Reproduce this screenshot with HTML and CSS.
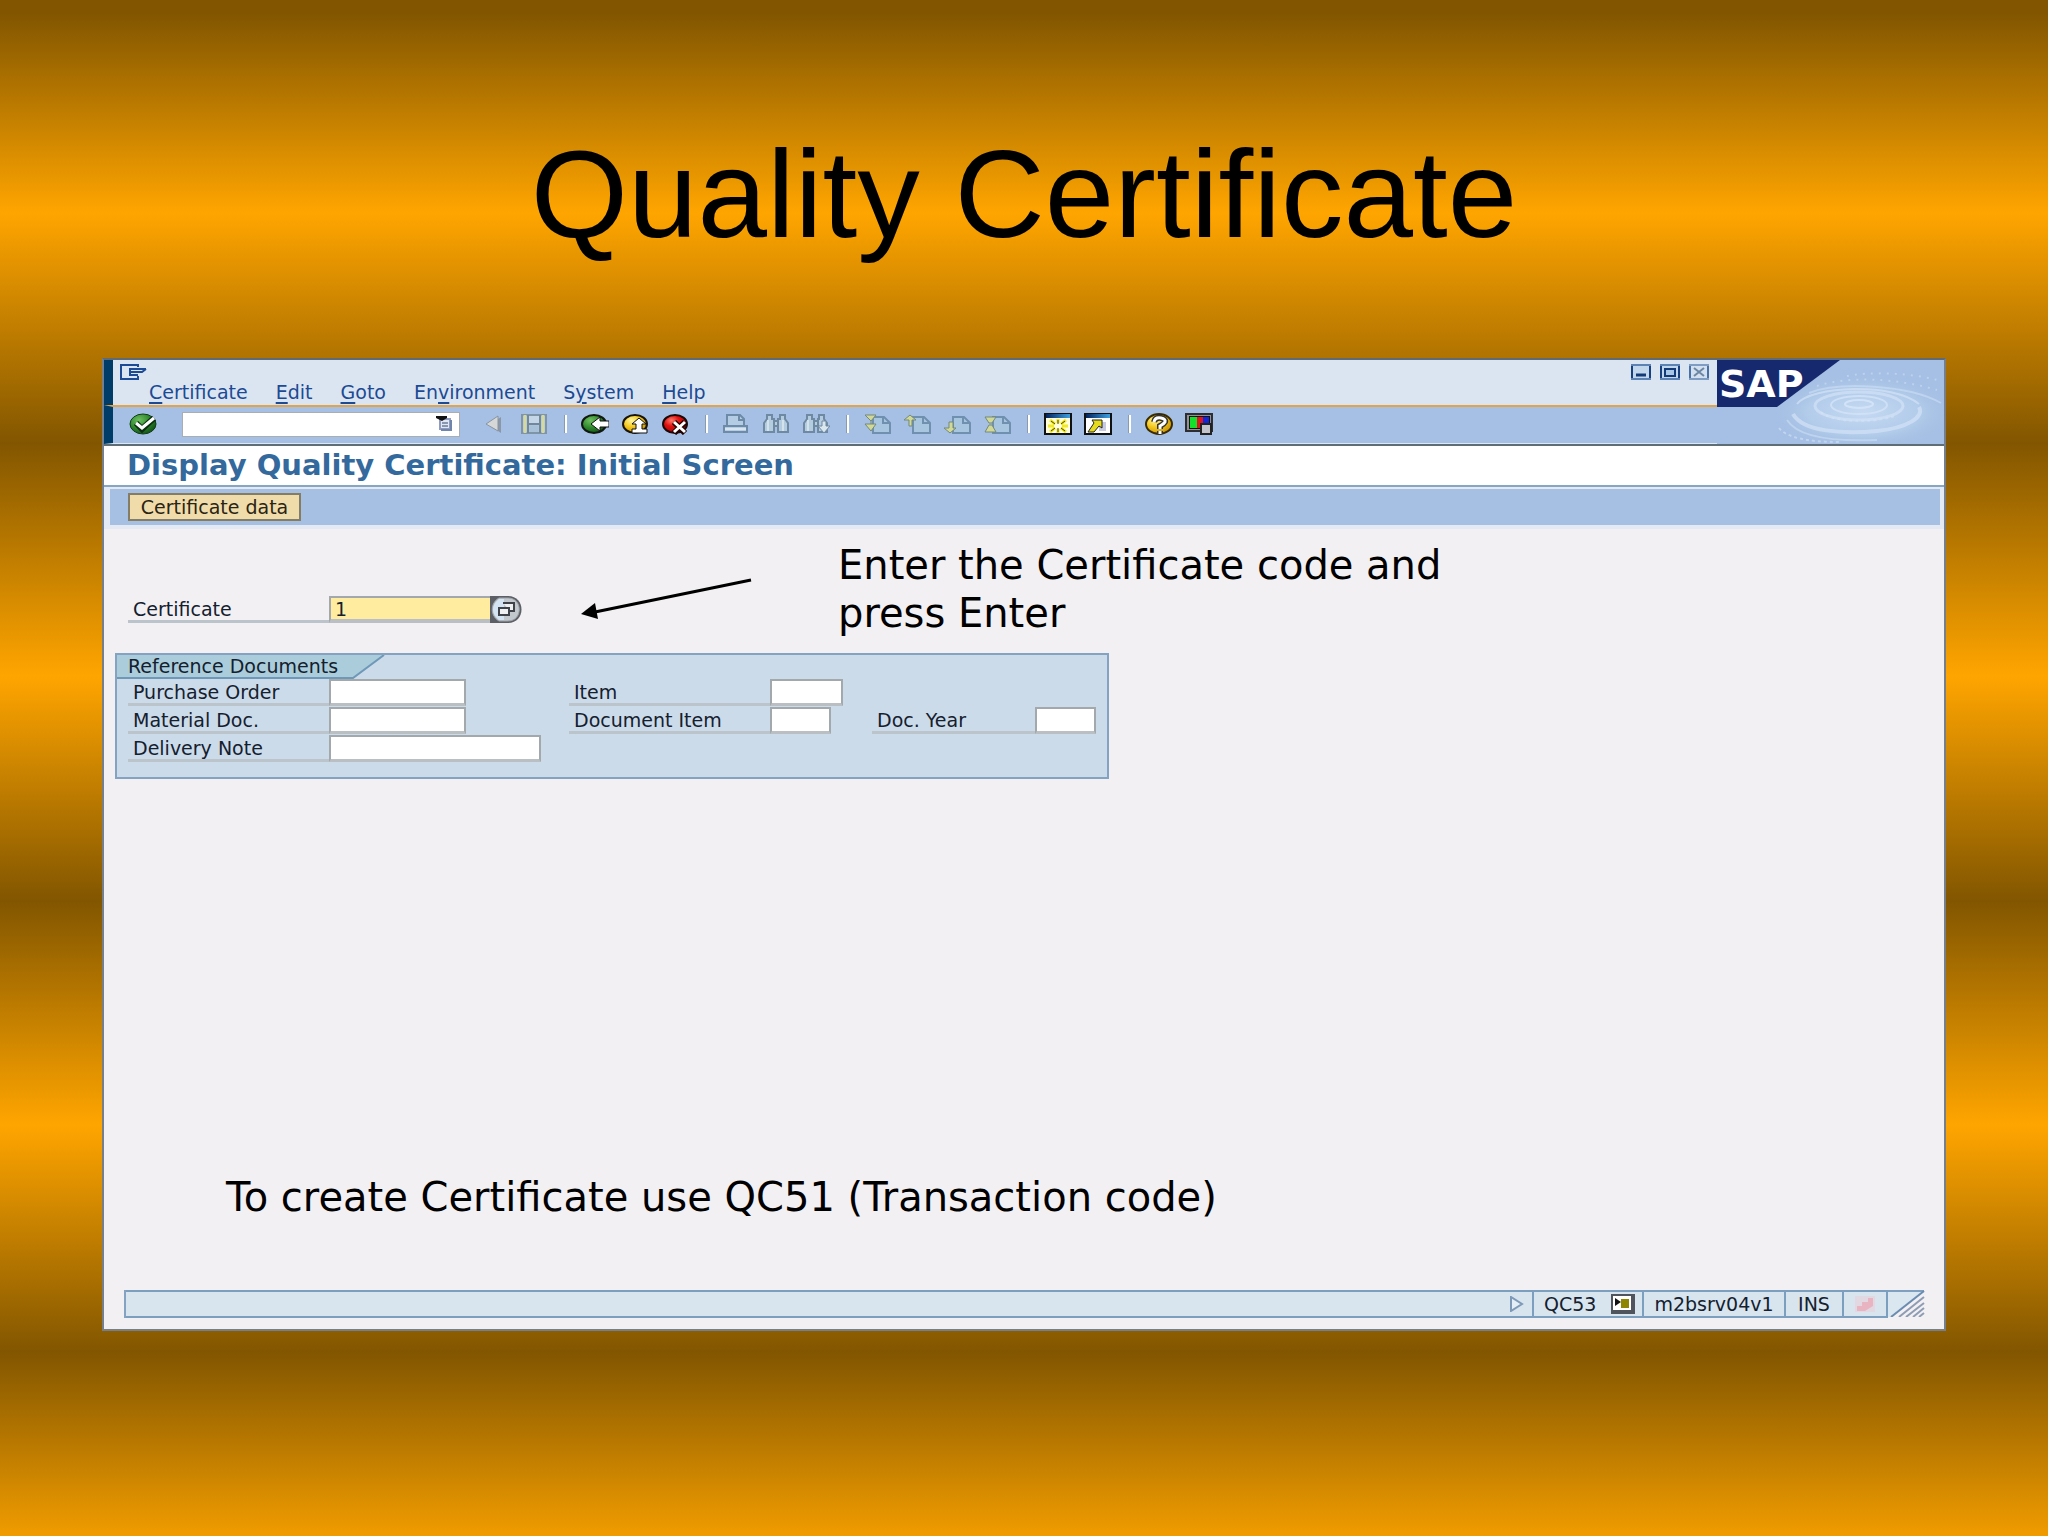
FILE: index.html
```html
<!DOCTYPE html>
<html lang="en">
<head>
<meta charset="utf-8">
<title>Quality Certificate</title>
<link rel="stylesheet" href="styles.css">
</head>
<body>
<svg width="0" height="0" class="defs" aria-hidden="true">
  <defs>
    <radialGradient id="green" cx=".35" cy=".3" r=".8"><stop offset="0" stop-color="#6fc060"/><stop offset=".5" stop-color="#2f8a2c"/><stop offset="1" stop-color="#0d4a14"/></radialGradient>
    <radialGradient id="yellow" cx=".35" cy=".3" r=".8"><stop offset="0" stop-color="#fff6a0"/><stop offset=".45" stop-color="#f5c81e"/><stop offset="1" stop-color="#c08a00"/></radialGradient>
    <radialGradient id="red" cx=".35" cy=".3" r=".8"><stop offset="0" stop-color="#ff7a6a"/><stop offset=".4" stop-color="#e01010"/><stop offset="1" stop-color="#900"/></radialGradient>
    <linearGradient id="bar" x1="0" x2="1"><stop offset="0" stop-color="#04245e"/><stop offset="1" stop-color="#3fa0e0"/></linearGradient>
    <radialGradient id="glow"><stop offset="0" stop-color="#c6daf2"/><stop offset=".6" stop-color="#b6cfec" stop-opacity=".8"/><stop offset="1" stop-color="#a5c0e4" stop-opacity="0"/></radialGradient>
    <g id="sheet" fill="#a9c6e0" stroke="#6f90ae" stroke-width="2"><path d="M10 4h11l6 6v10H10z"/><path d="M20 4v6h7" fill="none"/></g>
  </defs>
</svg>
<main class="slide">
  <h1 class="slide-title">Quality Certificate</h1>

  <section class="window">
    <header class="header">
      <div class="bars">
        <div class="menubar">
          <div class="titlestrip">
            <button class="icon-btn" aria-label="Window menu"><svg width="28" height="16" viewBox="0 0 28 16" fill="none" stroke="#1c4a94" stroke-width="2"><path d="M18 3V1H1v14h17v-3"/><path d="M10 4v8M10 5h16M10 8h12l4-3M10 11h8" /></svg></button>
            <div class="controls">
              <button class="icon-btn" aria-label="Minimize"><svg width="20" height="16" viewBox="0 0 20 16"><path d="M0 0h20v16H0z" fill="#c2d6ec"/><path d="M1 0v16M19 0v16" stroke="#16407e" stroke-width="2"/><path d="M0 1h20M0 15h20" stroke="#5d83b4" stroke-width="2"/><path d="M5 11h10" stroke="#123a78" stroke-width="3"/></svg></button>
              <button class="icon-btn" aria-label="Maximize"><svg width="20" height="16" viewBox="0 0 20 16"><path d="M0 0h20v16H0z" fill="#c2d6ec"/><path d="M1 0v16M19 0v16" stroke="#16407e" stroke-width="2"/><path d="M0 1h20M0 15h20" stroke="#5d83b4" stroke-width="2"/><path d="M5 5h10v7H5z" fill="#a8c6e6" stroke="#123a78" stroke-width="2"/></svg></button>
              <button class="icon-btn" aria-label="Close"><svg width="20" height="16" viewBox="0 0 20 16"><path d="M0 0h20v16H0z" fill="#d2e0ef"/><path d="M1 0v16M19 0v16" stroke="#4a71a6" stroke-width="2"/><path d="M0 1h20M0 15h20" stroke="#7f9dc2" stroke-width="2"/><path d="M5 4l10 8M15 4L5 12" stroke="#6d86a4" stroke-width="2"/></svg></button>
            </div>
          </div>
          <nav class="menus">
            <a href="#"><u>C</u>ertificate</a>
            <a href="#"><u>E</u>dit</a>
            <a href="#"><u>G</u>oto</a>
            <a href="#">En<u>v</u>ironment</a>
            <a href="#">S<u>y</u>stem</a>
            <a href="#"><u>H</u>elp</a>
          </nav>
        </div>
        <div class="toolbar">
          <button class="icon-btn" aria-label="Enter"><svg width="28" height="22" viewBox="0 0 28 22"><ellipse cx="14" cy="11" rx="13" ry="10" fill="url(#green)" stroke="#123c18"/><path d="M7 10l6 6L25 5" fill="none" stroke="#0b2e10" stroke-width="6"/><path d="M7 10l6 5L25 5" fill="none" stroke="#fff" stroke-width="3"/></svg></button>
          <div class="command">
            <input class="command-input" type="text" aria-label="Command">
            <svg class="command-icon" width="18" height="15" viewBox="0 0 18 15"><path d="M5 3h10v10H5z" fill="#dfe6f4" stroke="#8f9cc0" stroke-width="2"/><path d="M16 4v10H6" fill="none" stroke="#7085ac" stroke-width="2"/><path d="M1 0h11v2L7 5 1 2z" fill="#111"/><path d="M7 7h6M7 10h6" stroke="#33486e"/></svg>
          </div>
          <button class="icon-btn" aria-label="Hide command field"><svg width="28" height="22" viewBox="0 0 28 22"><path d="M21 4v16L9 12z" fill="#8b97a6"/><path d="M18 3v15L6 11z" fill="#d5d8d6" stroke="#8894a2"/></svg></button>
          <button class="icon-btn" aria-label="Save"><svg width="28" height="22" viewBox="0 0 28 22"><path d="M2 2h24v18H2z" fill="#abc4dc" stroke="#7f94a6" stroke-width="2"/><path d="M5 2v18M23 2v18" stroke="#d4d9a4" stroke-width="3"/><path d="M8 2v18M20 2v18M8 11h12" stroke="#70879c" stroke-width="2"/><path d="M9 3h10v7H9z" fill="#c4d6e8"/><path d="M10 13h8v6h-8z" fill="#a8c0d8"/></svg></button>
          <span class="sep"></span>
          <button class="icon-btn" aria-label="Back"><svg width="28" height="22" viewBox="0 0 28 22"><ellipse cx="13" cy="11" rx="12" ry="9" fill="url(#green)" stroke="#101810" stroke-width="2"/><path d="M10 11l9-7v4h9v6h-9v4z" fill="#fff" stroke="#111"/></svg></button>
          <button class="icon-btn" aria-label="Exit"><svg width="28" height="22" viewBox="0 0 28 22"><ellipse cx="14" cy="11" rx="12" ry="9" fill="url(#yellow)" stroke="#1a1408" stroke-width="2"/><path d="M18 5l7 6h-4v5h5v4H11v-4h4v-5h-4z" fill="#fff" stroke="#111"/></svg></button>
          <button class="icon-btn" aria-label="Cancel"><svg width="28" height="22" viewBox="0 0 28 22"><ellipse cx="14" cy="11" rx="12" ry="9" fill="url(#red)" stroke="#1a0808" stroke-width="2"/><path d="M13 9l11 11M24 9L13 20" stroke="#200" stroke-width="6"/><path d="M13 9l11 10M24 9L13 19" stroke="#fff" stroke-width="3"/></svg></button>
          <span class="sep"></span>
          <button class="icon-btn" aria-label="Print"><svg width="28" height="22" viewBox="0 0 28 22" fill="#b4cce4" stroke="#6d8aa6" stroke-width="2"><path d="M5 13V2h13l4 4v7z"/><path d="M17 2v5h5" fill="none"/><path d="M2 13h23v6H2z"/><path d="M3 16h21" stroke="#d8e4f0"/></svg></button>
          <button class="icon-btn" aria-label="Find"><svg width="28" height="22" viewBox="0 0 28 22" fill="#b4cce0" stroke="#7089a2" stroke-width="2"><path d="M5 2h5v4h2v13H2V10l3-4z"/><path d="M18 2h5v4l3 4v9H16V6h2z"/><path d="M12 8h4v5h-4z"/><path d="M6 7v11M21 7v11" stroke="#d4e2ec"/></svg></button>
          <button class="icon-btn" aria-label="Find next"><svg width="28" height="22" viewBox="0 0 28 22" fill="#b4cce0" stroke="#7089a2" stroke-width="2"><path d="M5 2h5v4h2v13H2V10l3-4z"/><path d="M17 2h5v4l3 4v9h-9V6h1z"/><path d="M12 8h4v5h-4z"/><path d="M6 7v11" stroke="#d4e2ec"/><path d="M20 8v5h-4l6 7 6-7h-4V8z" fill="#dbe7ee" stroke-width="1"/></svg></button>
          <span class="sep"></span>
          <button class="icon-btn" aria-label="First page"><svg width="28" height="22" viewBox="0 0 28 22"><use href="#sheet"/><path d="M2 2h11L8 8zM8 8v3M2 11h11l-5 7z" fill="#d2d996" stroke="#74897a"/></svg></button>
          <button class="icon-btn" aria-label="Previous page"><svg width="28" height="22" viewBox="0 0 28 22"><use href="#sheet"/><path d="M7 2l6 5h-4v6H6V7H1z" fill="#d2d996" stroke="#74897a"/></svg></button>
          <button class="icon-btn" aria-label="Next page"><svg width="28" height="22" viewBox="0 0 28 22"><use href="#sheet"/><path d="M6 9h4v6h3l-6 5-6-5h5z" fill="#d2d996" stroke="#74897a"/></svg></button>
          <button class="icon-btn" aria-label="Last page"><svg width="28" height="22" viewBox="0 0 28 22"><use href="#sheet"/><path d="M2 4h11l-4 6h-3zM6 12h3l4 7H2z" fill="#d2d996" stroke="#74897a"/></svg></button>
          <span class="sep"></span>
          <button class="icon-btn" aria-label="New session"><svg width="28" height="22" viewBox="0 0 28 22"><path d="M1 1h26v20H1z" fill="#fffde0" stroke="#111" stroke-width="2"/><path d="M2 1h24v4H2z" fill="url(#bar)"/><path d="M6 7l5 4M22 7l-5 4M6 19l5-4M22 19l-5-4M4 13h6M18 13h6M14 6v4M14 16v4" stroke="#f2ea20" stroke-width="3"/><path d="M7 8l4 3M21 8l-4 3M7 18l4-3M21 18l-4-3M14 7v4M14 15v4" stroke="#4b4708"/></svg></button>
          <button class="icon-btn" aria-label="Create shortcut"><svg width="28" height="22" viewBox="0 0 28 22"><path d="M1 1h26v20H1z" fill="#fff" stroke="#111" stroke-width="2"/><path d="M2 1h24v4H2z" fill="url(#bar)"/><path d="M15 9h7v9h-7z" fill="#c8cbe0"/><path d="M8 7h10v8l-3-2-5 6H4l6-9z" fill="#e6dc1c" stroke="#222"/></svg></button>
          <span class="sep"></span>
          <button class="icon-btn" aria-label="Help"><svg width="28" height="22" viewBox="0 0 28 22"><ellipse cx="14" cy="11" rx="13" ry="10" fill="url(#yellow)" stroke="#3a2a00" stroke-width="2"/><path d="M9 9q1-5 7-4 5 1 4 4-1 2-5 4v3M15 18v3" fill="none" stroke="#333" stroke-width="6"/><path d="M9 9q1-5 7-4 5 1 4 4-1 2-5 4v3M15 18v3" fill="none" stroke="#fff" stroke-width="3"/></svg></button>
          <button class="icon-btn" aria-label="Layout"><svg width="28" height="22" viewBox="0 0 28 22"><path d="M1 1h26v17H1z" fill="#8f9398" stroke="#2e2e30" stroke-width="2"/><path d="M4 3h21v13H4z" fill="#111"/><path d="M5 4h7v11H5z" fill="#12e02a"/><path d="M12 4h6v11h-6z" fill="#e01220"/><path d="M18 4h6v7h-6z" fill="#1424d8"/><path d="M16 11h10v10H16z" fill="#c4c4cc" stroke="#222" stroke-width="2"/></svg></button>
        </div>
      </div>
      <svg class="brand" width="227" height="84" viewBox="0 0 227 84">
        <ellipse cx="146" cy="52" rx="92" ry="38" fill="url(#glow)"/>
        <g fill="none" stroke="#d3e3f7">
          <ellipse cx="142" cy="44" rx="14" ry="4" stroke-width="2"/>
          <ellipse cx="142" cy="45" rx="28" ry="9" stroke-width="2" opacity=".8"/>
          <ellipse cx="142" cy="46" rx="44" ry="14" stroke-width="3" opacity=".7"/>
          <path d="M76 54c10 18 50 20 84 17 30-3 48-14 42-24" stroke-width="4" opacity=".7"/>
          <path d="M80 44c14-18 96-22 122 0" stroke-width="2" opacity=".7"/>
          <path d="M92 33c30-12 100-8 132 10" stroke-width="2" opacity=".5"/>
          <path d="M70 60c10 16 40 22 90 20" stroke-width="2" opacity=".5"/>
          <path d="M62 68c8 10 30 14 60 14M104 52c10 10 50 12 74 4" stroke-width="2" stroke-dasharray="3 3" opacity=".6"/>
          <path d="M100 26c30-10 80-8 120 4M130 16c20-4 60-4 90 4" stroke-width="2" stroke-dasharray="2 6" opacity=".5"/>
        </g>
        <path d="M0 0h123L60 47H0z" fill="#16296f"/>
        <text x="2" y="37" class="brand-text">SAP</text>
      </svg>
    </header>

    <h2 class="screen-title">Display Quality Certificate: Initial Screen</h2>
    <div class="actions"><button class="action-btn">Certificate data</button></div>

    <form class="content">
      <div class="top-row">
        <div class="field cert-field">
          <label for="cert">Certificate</label>
          <input id="cert" class="box focus" type="text" value="1">
          <button type="button" class="icon-btn" aria-label="Possible entries"><svg width="32" height="27" viewBox="0 0 32 27"><path d="M0 0h18c18 0 18 27 0 27H0z" fill="#5c6066"/><path d="M9 2h9c15 0 15 23 0 23H9C0 20 0 7 9 2z" fill="#c2c8ce" stroke="#9ea4aa"/><path d="M9 3c-8 6-8 15 0 21h5V3z" fill="#d4e4f2"/><path d="M13 7h11v8h-4M9 12h10v7H9z" fill="#eef0f2" stroke="#40444a" stroke-width="2"/></svg></button>
        </div>
        <svg class="arrow" width="172" height="44" viewBox="0 0 172 44"><path d="M170 4L14 36" stroke="#000" stroke-width="3"/><path d="M0 38l14-11 3 16z"/></svg>
        <p class="note callout">Enter the Certificate code and<br>press Enter</p>
      </div>

      <fieldset class="group">
        <legend class="group-title"><svg width="268" height="24" viewBox="0 0 268 24"><path d="M0 0h267l-31 23H0z" fill="#abcddb"/><path d="M0 23h236l31-23" fill="none" stroke="#6f98b8" stroke-width="2"/></svg><span>Reference Documents</span></legend>
        <div class="grid">
          <div class="field"><label for="po">Purchase Order</label><input id="po" class="box w-m" type="text"></div>
          <div class="field"><label for="item">Item</label><input id="item" class="box w-s" type="text"></div>
          <div class="field row-start"><label for="mat">Material Doc.</label><input id="mat" class="box w-m" type="text"></div>
          <div class="field"><label for="ditem">Document Item</label><input id="ditem" class="box w-xs" type="text"></div>
          <div class="field year"><label for="year">Doc. Year</label><input id="year" class="box w-xs" type="text"></div>
          <div class="field row-start"><label for="dn">Delivery Note</label><input id="dn" class="box w-l" type="text"></div>
        </div>
      </fieldset>

      <p class="note hint">To create Certificate use QC51 (Transaction code)</p>
    </form>

    <footer class="status">
      <div class="cell message"><svg width="14" height="16" viewBox="0 0 14 16"><path d="M1 1v14l11-7z" fill="#e4eef6" stroke="#7f9ab8" stroke-width="2"/></svg></div>
      <div class="cell session">QC53 <svg width="24" height="20" viewBox="0 0 24 20"><path d="M0 0h24v20H0z" fill="#50545c"/><path d="M2 2h18v14H2z" fill="#fff"/><path d="M4 4l6 4-6 4z" fill="#111"/><path d="M10 5h8v9h-8z" fill="#8f8600"/></svg></div>
      <div class="cell server">m2bsrv04v1</div>
      <div class="cell mode">INS</div>
      <div class="cell signal"><svg width="20" height="16" viewBox="0 0 20 16"><path d="M0 0h20v16H0z" fill="#e2d8e2"/><path d="M2 15V10h5V6h6V2h5v8l-8 5z" fill="#e8b4c2"/></svg></div>
      <svg class="grip" width="37" height="27" viewBox="0 0 37 27"><path d="M0 0h36L4 27H0z" fill="#dae6f0"/><path d="M0 1h36" stroke="#7fa0c0" stroke-width="2"/><path d="M3 27L36 1" stroke="#6a8cb0" stroke-width="2"/><path d="M11 27L36 7M18 27l18-14M25 27l11-9M31 27l5-4" stroke="#8e9cb4" stroke-width="2"/></svg>
    </footer>
  </section>
</main>
</body>
</html>
```
FILE: styles.css
```css
* { box-sizing: border-box; }

body {
  margin: 0;
  font-family: "DejaVu Sans", Verdana, sans-serif;
  font-size: 19px;
  color: #14202e;
}

button, input { font: inherit; color: inherit; }
h1, h2, p { margin: 0; }
svg { display: block; flex: none; }
.defs { position: absolute; }

.slide {
  display: flex;
  flex-direction: column;
  min-height: 100vh;
  padding: 122px 102px 205px;
  background: linear-gradient(to bottom,
    #825600 0, #825600 14px, #ffa500 213px, #825600 443px, #ffa500 676px,
    #825600 901px, #ffa500 1125px, #825600 1352px, #ffa500 1560px);
}

.slide-title {
  margin-bottom: 92px;
  font: 400 125px/144px "Liberation Sans", Arial, sans-serif;
  text-align: center;
  color: #000;
}

.window {
  display: flex;
  flex-direction: column;
  flex: 1;
  border: 2px solid #75808c;
  border-top-color: #5f6a74;
  background: #f2f0f3;
}

.icon-btn {
  display: block;
  flex: none;
  padding: 0;
  border: 0;
  background: none;
}

/* Header: menus, system toolbar and brand art */
.header {
  display: flex;
  border-bottom: 2px solid #5f6d76;
}
.bars { flex: 1; min-width: 0; }
.menubar {
  height: 45px;
  padding: 4px 8px 0 7px;
  border-left: 9px solid #003c68;
  background: #dbe5f1;
}
.titlestrip { display: flex; justify-content: space-between; height: 16px; }
.controls { display: flex; gap: 9px; }
.menus { display: flex; gap: 28px; padding-left: 29px; line-height: 24px; }
.menus a { color: #1c4a94; text-decoration: none; }
.menus u { text-decoration-thickness: 2px; text-underline-offset: 3px; }

.toolbar {
  display: flex;
  align-items: center;
  gap: 12px;
  height: 39px;
  padding: 0 0 2px 16px;
  border-top: 2px solid #e0a44c;
  border-bottom: 1px solid #dce8f4;
  border-left: 9px solid #003c68;
  background: #a5c0e4;
}
.command { position: relative; width: 278px; margin: 0 8px 0 13px; }
.command-input {
  display: block;
  width: 100%;
  height: 25px;
  padding: 0 30px 0 4px;
  border: 1px solid #a9aeb0;
  background: #fff;
}
.command-icon { position: absolute; right: 7px; top: 4px; }
.sep {
  width: 9px;
  height: 18px;
  background: linear-gradient(90deg, transparent 4px, #8b9aad 4px, #8b9aad 5px, #fff 5px, #fff 7px, transparent 7px);
}
.brand { background: #a5c0e4; }
.brand-text { font: 700 38px "DejaVu Sans", sans-serif; fill: #fff; }

.screen-title {
  padding-left: 23px;
  border-bottom: 2px solid #87a6c4;
  background: #fff;
  font-size: 29px;
  line-height: 39px;
  color: #33699c;
}

.actions {
  display: flex;
  align-items: center;
  height: 42px;
  padding-left: 18px;
  border: solid #e3eaf3;
  border-width: 2px 4px 4px 6px;
  background: #a5c0e2;
}
.action-btn {
  height: 28px;
  width: 173px;
  padding: 0;
  border: 2px solid #857c66;
  background: #f0dcaa;
  line-height: 24px;
  white-space: nowrap;
  color: #2a2414;
}

/* Selection screen */
.content { display: flex; flex-direction: column; flex: 1; }
.top-row { display: flex; align-items: flex-start; height: 124px; padding-left: 24px; }
.cert-field { margin-top: 67px; }
.field { display: flex; height: 27px; }
.field label {
  width: 201px;
  padding-left: 5px;
  border-bottom: 3px solid #bcc4cb;
  line-height: 26px;
}
.box {
  height: 27px;
  padding: 0 4px;
  border: 2px solid #a2a8ac;
  border-bottom: 3px solid #b9bfc2;
  background: #fff;
}
.focus { width: 161px; border-width: 2px 0 4px 2px; background: #ffec9f; }
.w-xs { width: 61px; }
.w-s { width: 73px; }
.w-m { width: 137px; }
.w-l { width: 212px; }

.arrow { margin: 47px 0 0 59px; }
.note { font-size: 40px; line-height: 48px; color: #000; white-space: nowrap; }
.callout { margin: 12px 0 0 85px; }
.hint { margin: auto 0 69px 122px; }

.group {
  width: 994px;
  height: 126px;
  margin: 0 0 0 11px;
  padding: 0;
  border: 2px solid #84a3c2;
  background: #ccdbea;
}
.group-title {
  display: grid;
  float: left;
  width: 100%;
  height: 24px;
  padding: 0;
}
.group-title svg, .group-title span { grid-area: 1 / 1; }
.group-title span { padding-left: 11px; line-height: 22px; }
.grid {
  display: grid;
  clear: both;
  grid-template-columns: 441px 303px auto;
  row-gap: 1px;
  padding-left: 11px;
}
.row-start { grid-column-start: 1; }
.year label { width: 163px; }

/* Status line */
.status {
  display: flex;
  height: 28px;
  margin: 0 19px 11px 20px;
  border-left: 2px solid #84a3c2;
}
.cell {
  display: flex;
  align-items: center;
  border: solid #7c9fc0;
  border-width: 2px 2px 2px 0;
  background: #d8e5ef;
  line-height: 24px;
}
.message { flex: 1; justify-content: flex-end; padding-right: 8px; }
.session { width: 110px; justify-content: space-between; padding: 0 7px 0 10px; }
.server { width: 142px; justify-content: center; }
.mode { width: 58px; justify-content: center; }
.signal { width: 44px; justify-content: center; }
```
